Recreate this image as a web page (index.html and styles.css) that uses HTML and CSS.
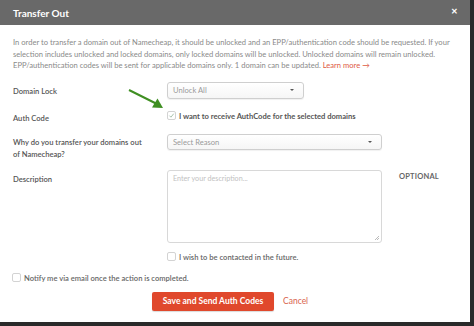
FILE: index.html
```html
<!DOCTYPE html>
<html>
<head>
<meta charset="utf-8">
<link rel="stylesheet" href="styles.css">
</head>
<body>
<div class="modal">
  <div class="header">
    <span class="title">Transfer Out</span>
    <span class="close">&#x2715;</span>
  </div>
  <div class="content">
    <p class="intro">In order to transfer a domain out of Namecheap, it should be unlocked and an EPP/authentication code should be requested. If your<br>selection includes unlocked and locked domains, only locked domains will be unlocked. Unlocked domains will remain unlocked.<br>EPP/authentication codes will be sent for applicable domains only. 1 domain can be updated. <a class="learn">Learn more &rarr;</a></p>

    <div class="row row-lock">
      <div class="label">Domain Lock</div>
      <div class="control">
        <div class="select sel-short"><span>Unlock All</span><i class="caret"></i></div>
      </div>
    </div>

    <div class="row row-auth">
      <div class="label">Auth Code</div>
      <div class="control check-line strong">
        <span class="box checked"><svg viewBox="0 0 10 10" width="9" height="9"><path d="M2 5.2 L4.2 7.4 L8.2 2.4" fill="none" stroke="#9ab8a0" stroke-width="1.2"/></svg></span>
        <span>I want to receive AuthCode for the selected domains</span>
      </div>
    </div>

    <div class="row row-why">
      <div class="label">Why do you transfer your domains out<br>of Namecheap?</div>
      <div class="control">
        <div class="select sel-long"><span>Select Reason</span><i class="caret"></i></div>
      </div>
    </div>

    <div class="row row-desc">
      <div class="label">Description</div>
      <div class="control desc-ctrl">
        <div class="textarea"><span>Enter your description...</span>
          <svg class="grip" viewBox="0 0 6 6" width="6" height="6"><path d="M1 5 L5 1 M3 5 L5 3" stroke="#aaa" stroke-width="0.8"/></svg>
        </div>
        <div class="optional">OPTIONAL</div>
      </div>
    </div>

    <div class="row row-contact">
      <div class="label"></div>
      <div class="control check-line">
        <span class="box"></span>
        <span>I wish to be contacted in the future.</span>
      </div>
    </div>

    <div class="check-line notify">
      <span class="box"></span>
      <span>Notify me via email once the action is completed.</span>
    </div>

    <div class="actions">
      <button class="btn">Save and Send Auth Codes</button>
      <a class="cancel">Cancel</a>
    </div>
  </div>
  <svg class="arrow" width="50" height="30" viewBox="0 0 50 30">
    <path d="M2 2 L30 16" stroke="#3f8f22" stroke-width="2" fill="none"/>
    <path d="M36 20 L25 19.5 L30.5 10.5 Z" fill="#3f8f22"/>
  </svg>
</div>
</body>
</html>
```

FILE: styles.css
```css
* { box-sizing: border-box; }
html, body { margin: 0; padding: 0; }
body {
  width: 474px;
  height: 326px;
  background: #2a2a2a;
  font-family: "Lato", "Open Sans", sans-serif;
  overflow: hidden;
}
.modal {
  position: relative;
  width: 470px;
  height: 322px;
  background: #fff;
}
.header {
  height: 25px;
  background: #696969;
  display: flex;
  align-items: center;
  justify-content: space-between;
  padding: 0 12px 0 13px;
}
.title {
  color: #fff;
  font-weight: 700;
  font-size: 10px;
}
.close {
  color: #fff;
  font-size: 8px;
  font-weight: 700;
  margin-top: -3px;
}
.content {
  padding: 12px 13px 0 13px;
}
.intro {
  margin: 0;
  font-size: 7.6px;
  line-height: 11.5px;
  color: #8a8a8a;
  white-space: nowrap;
}
.learn { color: #de5b45; }
.row {
  display: flex;
}
.label {
  width: 154px;
  flex: none;
  font-size: 7.6px;
  color: #555;
  font-weight: 600;
  line-height: 12px;
}
.control { flex: 1; }
.row-lock { margin-top: 10px; align-items: center; height: 17px; }
.row-lock .label { padding-top: 2px; }
.row-auth { margin-top: 10px; height: 14px; }
.row-auth .label { padding-top: 3px; }
.row-why { margin-top: 11px; }
.row-why .label { padding-top: 2px; }
.row-desc { margin-top: 10px; }
.row-desc .label { padding-top: 3px; }
.row-contact { margin-top: 9px; }

.select {
  height: 17px;
  border: 1px solid #cfcfcf;
  border-radius: 3px;
  background: linear-gradient(#fff, #f6f6f6);
  display: flex;
  align-items: center;
  justify-content: space-between;
  padding: 0 9px 0 5px;
  font-size: 7.6px;
  color: #9a9a9a;
  box-shadow: 0 1px 1px rgba(0,0,0,0.06);
}
.sel-short { width: 137px; }
.sel-long { width: 215px; height: 16px; }
.caret {
  width: 0; height: 0;
  border-left: 2px solid transparent;
  border-right: 2px solid transparent;
  border-top: 2px solid #555;
}
.check-line {
  display: flex;
  align-items: center;
  gap: 3px;
  font-size: 7.6px;
  color: #666;
  font-weight: 600;
}
.check-line.strong { color: #555; font-weight: 700; }
.box {
  width: 9px;
  height: 9px;
  border: 1px solid #d3d3d3;
  border-radius: 2px;
  background: #fff;
  flex: none;
  display: flex;
  align-items: center;
  justify-content: center;
}
.box svg { display: block; }
.desc-ctrl { display: flex; gap: 17px; }
.textarea {
  position: relative;
  width: 215px;
  height: 73px;
  border: 1px solid #d8d8d8;
  border-radius: 3px;
  padding: 3px 5px;
  font-size: 7.2px;
  color: #c2c2c2;
}
.grip { position: absolute; right: 1px; bottom: 1px; }
.optional {
  font-size: 7.5px;
  font-weight: 700;
  color: #666;
  padding-top: 2px;
  letter-spacing: 0.2px;
}
.notify { margin-top: 11px; margin-left: -1px; }
.actions {
  display: flex;
  align-items: center;
  gap: 9px;
  margin-top: 9px;
  padding-left: 139px;
}
.btn {
  width: 122px;
  height: 19px;
  background: #e0482c;
  border: none;
  border-radius: 2px;
  color: #fff;
  font-family: inherit;
  font-weight: 700;
  font-size: 8.5px;
  padding: 0;
  box-shadow: 0 1px 1px rgba(0,0,0,0.15);
}
.cancel {
  font-size: 8.5px;
  color: #d9634e;
}
.arrow {
  position: absolute;
  left: 127px;
  top: 88px;
}
```
